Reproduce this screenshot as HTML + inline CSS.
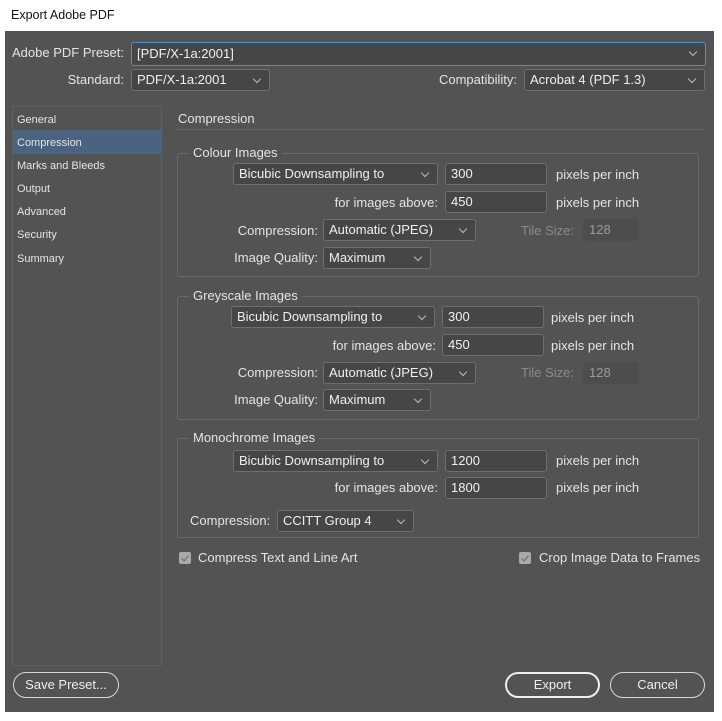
<!DOCTYPE html>
<html><head><style>
*{box-sizing:border-box;margin:0;padding:0}
body{width:722px;height:721px;background:#fff;position:relative;overflow:hidden;font-family:"Liberation Sans",sans-serif;font-size:13px;color:#e4e4e4}
.a{position:absolute;white-space:nowrap;line-height:16px}
.r{text-align:right}
#dark{position:absolute;left:5px;top:31px;width:709px;height:681px;background:#535353}
.f{position:absolute;background:#464646;border:1px solid #6e6e6e;border-radius:3px;padding-left:5px;line-height:20px;color:#f0f0f0;white-space:nowrap}
.s::after{content:"";position:absolute;right:9px;top:6px;width:5px;height:5px;border-right:1px solid #bbb;border-bottom:1px solid #bbb;transform:rotate(45deg)}
.g{position:absolute;border:1px solid #696969;border-radius:3px}
.lg{position:absolute;background:#535353;padding:0 4px;line-height:16px;white-space:nowrap}
.side{position:absolute;left:12px;top:106px;width:150px;height:560px;border:1px solid #5f5f5f;background:#535353}
.si{position:absolute;left:4px;font-size:11px;line-height:16px}
.btn{position:absolute;border:1px solid #d8d8d8;border-radius:13px;text-align:center;line-height:24px;color:#eee}
.cb{position:absolute;width:12px;height:12px;background:#a9a9a9;border-radius:2px}
.cb::after{content:"";position:absolute;left:4px;top:2px;width:3px;height:6px;border-right:1px solid #666;border-bottom:1px solid #666;transform:rotate(40deg)}
.dis{background:#4d4d4d;border-color:#4d4d4d;color:#9a9a9a}
</style></head><body>
<div class="a" style="left:11px;top:7px;color:#111;font-size:12.5px">Export Adobe PDF</div>
<div id="dark"></div>
<div class="a r" style="left:0;width:124px;top:45px;font-size:13px">Adobe PDF Preset:</div>
<div class="f s" style="left:131px;top:42px;width:575px;height:24px;border-color:#4a90d9;line-height:22px;font-size:13px">[PDF/X-1a:2001]</div>
<div class="a r" style="left:0;width:124px;top:72px;font-size:13px">Standard:</div>
<div class="f s" style="left:131px;top:69px;width:139px;height:22px">PDF/X-1a:2001</div>
<div class="a r" style="left:300px;width:217px;top:72px;font-size:13px">Compatibility:</div>
<div class="f s" style="left:524px;top:69px;width:181px;height:22px">Acrobat 4 (PDF 1.3)</div>

<div class="side">
<div style="position:absolute;left:0;top:23px;width:148px;height:24px;background:#4a6380"></div>
<div class="si" style="top:5px">General</div>
<div class="si" style="top:28px">Compression</div>
<div class="si" style="top:51px">Marks and Bleeds</div>
<div class="si" style="top:74px">Output</div>
<div class="si" style="top:97px">Advanced</div>
<div class="si" style="top:120px">Security</div>
<div class="si" style="top:144px">Summary</div>
</div>

<div class="a" style="left:178px;top:111px">Compression</div>
<div style="position:absolute;left:177px;top:129px;width:528px;height:1px;background:#666"></div>

<div class="g" style="left:177px;top:153px;width:522px;height:124px"></div>
<div class="lg" style="left:189px;top:145px">Colour Images</div>
<div class="f s" style="left:233px;top:163px;width:205px;height:22px">Bicubic Downsampling to</div>
<div class="f" style="left:445px;top:163px;width:102px;height:22px">300</div>
<div class="a" style="left:556px;top:167px">pixels per inch</div>
<div class="a r" style="left:200px;width:238px;top:195px">for images above:</div>
<div class="f" style="left:445px;top:191px;width:102px;height:22px">450</div>
<div class="a" style="left:556px;top:195px">pixels per inch</div>
<div class="a r" style="left:200px;width:118px;top:223px">Compression:</div>
<div class="f s" style="left:323px;top:219px;width:153px;height:22px">Automatic (JPEG)</div>
<div class="a" style="left:521px;top:223px;color:#8a8a8a">Tile Size:</div>
<div class="f dis" style="left:583px;top:219px;width:56px;height:22px">128</div>
<div class="a r" style="left:200px;width:118px;top:250px">Image Quality:</div>
<div class="f s" style="left:323px;top:247px;width:108px;height:22px">Maximum</div>

<div class="g" style="left:177px;top:296px;width:522px;height:124px"></div>
<div class="lg" style="left:189px;top:288px">Greyscale Images</div>
<div class="f s" style="left:231px;top:306px;width:204px;height:22px">Bicubic Downsampling to</div>
<div class="f" style="left:442px;top:306px;width:102px;height:22px">300</div>
<div class="a" style="left:551px;top:310px">pixels per inch</div>
<div class="a r" style="left:200px;width:236px;top:338px">for images above:</div>
<div class="f" style="left:442px;top:334px;width:102px;height:22px">450</div>
<div class="a" style="left:551px;top:338px">pixels per inch</div>
<div class="a r" style="left:200px;width:118px;top:365px">Compression:</div>
<div class="f s" style="left:323px;top:362px;width:153px;height:22px">Automatic (JPEG)</div>
<div class="a" style="left:521px;top:365px;color:#8a8a8a">Tile Size:</div>
<div class="f dis" style="left:583px;top:362px;width:56px;height:22px">128</div>
<div class="a r" style="left:200px;width:118px;top:392px">Image Quality:</div>
<div class="f s" style="left:323px;top:389px;width:108px;height:22px">Maximum</div>

<div class="g" style="left:177px;top:438px;width:522px;height:100px"></div>
<div class="lg" style="left:189px;top:430px">Monochrome Images</div>
<div class="f s" style="left:233px;top:450px;width:205px;height:22px">Bicubic Downsampling to</div>
<div class="f" style="left:445px;top:450px;width:102px;height:22px">1200</div>
<div class="a" style="left:556px;top:453px">pixels per inch</div>
<div class="a r" style="left:200px;width:238px;top:480px">for images above:</div>
<div class="f" style="left:445px;top:477px;width:102px;height:22px">1800</div>
<div class="a" style="left:556px;top:480px">pixels per inch</div>
<div class="a" style="left:190px;top:513px">Compression:</div>
<div class="f s" style="left:277px;top:510px;width:137px;height:22px">CCITT Group 4</div>

<div class="cb" style="left:179px;top:552px"></div>
<div class="a" style="left:198px;top:550px">Compress Text and Line Art</div>
<div class="cb" style="left:519px;top:552px"></div>
<div class="a" style="left:539px;top:550px">Crop Image Data to Frames</div>

<div class="btn" style="left:13px;top:672px;width:106px;height:26px">Save Preset...</div>
<div class="btn" style="left:505px;top:672px;width:95px;height:26px;border:2px solid #eee;line-height:22px">Export</div>
<div class="btn" style="left:610px;top:672px;width:95px;height:26px">Cancel</div>
</body></html>
